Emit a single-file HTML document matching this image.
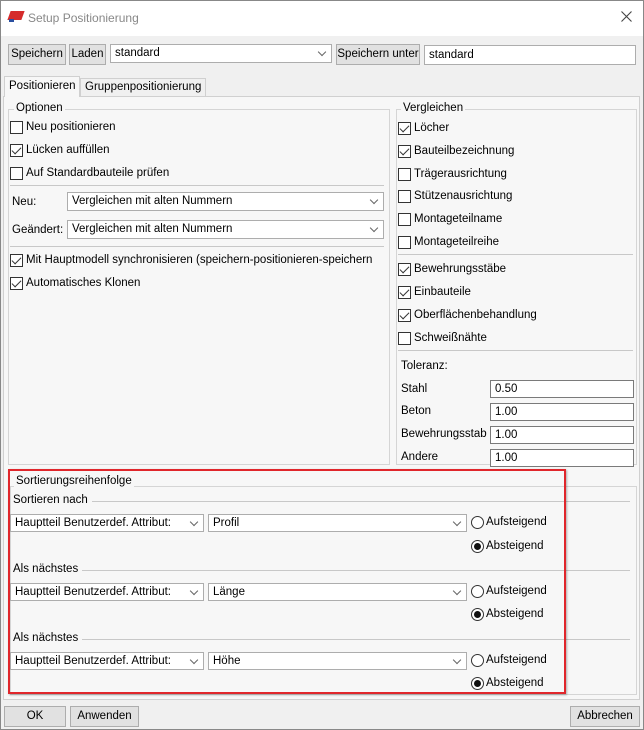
<!DOCTYPE html>
<html><head><meta charset="utf-8"><style>
*{box-sizing:border-box;margin:0;padding:0}
body{width:644px;height:730px;background:#f0f0f0;font-family:"Liberation Sans",sans-serif;font-size:11.5px;color:#000;position:relative;overflow:hidden}
.a{position:absolute;white-space:nowrap}
.win{position:absolute;left:0;top:0;width:644px;height:730px;border:1px solid #888}
.btn{position:absolute;background:#e1e1e1;border:1px solid #adadad;text-align:center;line-height:18px;white-space:nowrap}
.inp{position:absolute;background:#fff;border:1px solid #7a7a7a;padding-left:4px;line-height:16px;white-space:nowrap}
.cmb{position:absolute;background:#fff;border:1px solid #adadad;padding-left:4px;line-height:16px;white-space:nowrap}
.cmb:after{content:"";position:absolute;right:6px;top:4px;width:5px;height:5px;border-right:1px solid #666;border-bottom:1px solid #666;transform:rotate(45deg)}
.cb{position:absolute;width:13px;height:13px;border:1px solid #333;background:#fff}
.cb.k:after{content:"";position:absolute;left:3px;top:0px;width:4px;height:8px;border-right:1px solid #333;border-bottom:1px solid #333;transform:rotate(45deg)}
.hr{position:absolute;height:1px;background:#c8c8c8}
.rd{position:absolute;width:13px;height:13px;border:1px solid #333;border-radius:50%;background:#fff}
.rd.k:after{content:"";position:absolute;left:2px;top:2px;width:7px;height:7px;border-radius:50%;background:#111}
.grp{position:absolute;border:1px solid #d5d5d5}
</style></head><body>
<div class="a" style="left:0;top:0;width:644px;height:36px;background:#fff"></div>
<div class="a" style="left:9px;top:11px;width:14px;height:9px;background:#d52b2b;transform:skewX(-20deg)"></div>
<div class="a" style="left:9px;top:19px;width:5px;height:3px;background:#2a4fa0"></div>
<div class="a" style="left:28px;top:11px;color:#888;font-size:12px">Setup Positionierung</div>
<svg class="a" style="left:621px;top:11px" width="11" height="11"><path d="M0.5 0.5L10.5 10.5M10.5 0.5L0.5 10.5" stroke="#444" stroke-width="1.1"/></svg>

<div class="btn" style="left:8px;top:44px;width:58px;height:21px">Speichern</div>
<div class="btn" style="left:69px;top:44px;width:37px;height:21px">Laden</div>
<div class="cmb" style="left:110px;top:44px;width:222px;height:19px">standard</div>
<div class="btn" style="left:336px;top:44px;width:84px;height:21px">Speichern unter</div>
<div class="inp" style="left:424px;top:45px;width:212px;height:20px;border-color:#adadad;line-height:18px">standard</div>

<div class="a" style="left:3px;top:96px;width:637px;height:604px;border:1px solid #d0d0d0;background:#f7f7f7"></div>
<div class="a" style="left:4px;top:76px;width:76px;height:21px;background:#f7f7f7;border:1px solid #d0d0d0;border-bottom:none;padding:3px 0 0 4px">Positionieren</div>
<div class="a" style="left:80px;top:78px;width:126px;height:18px;background:#f0f0f0;border:1px solid #d0d0d0;border-bottom:none;padding:2px 0 0 4px">Gruppenpositionierung</div>

<div class="grp" style="left:8px;top:109px;width:382px;height:356px"></div>
<div class="a" style="left:14px;top:102px;background:#f7f7f7;padding:0 2px">Optionen</div>
<div class="cb" style="left:10px;top:121px"></div><div class="a" style="left:26px;top:121px">Neu positionieren</div>
<div class="cb k" style="left:10px;top:144px"></div><div class="a" style="left:26px;top:144px">Lücken auffüllen</div>
<div class="cb" style="left:10px;top:167px"></div><div class="a" style="left:26px;top:167px">Auf Standardbauteile prüfen</div>
<div class="hr" style="left:10px;top:185px;width:374px"></div>
<div class="a" style="left:12px;top:196px">Neu:</div>
<div class="cmb" style="left:67px;top:192px;width:317px;height:19px">Vergleichen mit alten Nummern</div>
<div class="a" style="left:12px;top:224px">Geändert:</div>
<div class="cmb" style="left:67px;top:220px;width:317px;height:19px">Vergleichen mit alten Nummern</div>
<div class="hr" style="left:10px;top:246px;width:374px"></div>
<div class="cb k" style="left:10px;top:254px"></div><div class="a" style="left:26px;top:254px;width:360px;overflow:hidden">Mit Hauptmodell synchronisieren (speichern-positionieren-speichern</div>
<div class="cb k" style="left:10px;top:277px"></div><div class="a" style="left:26px;top:277px">Automatisches Klonen</div>

<div class="grp" style="left:396px;top:109px;width:241px;height:356px"></div>
<div class="a" style="left:401px;top:102px;background:#f7f7f7;padding:0 2px">Vergleichen</div>
<div class="cb k" style="left:398px;top:122px"></div><div class="a" style="left:414px;top:122px">Löcher</div>
<div class="cb k" style="left:398px;top:145px"></div><div class="a" style="left:414px;top:145px">Bauteilbezeichnung</div>
<div class="cb" style="left:398px;top:168px"></div><div class="a" style="left:414px;top:168px">Trägerausrichtung</div>
<div class="cb" style="left:398px;top:190px"></div><div class="a" style="left:414px;top:190px">Stützenausrichtung</div>
<div class="cb" style="left:398px;top:213px"></div><div class="a" style="left:414px;top:213px">Montageteilname</div>
<div class="cb" style="left:398px;top:236px"></div><div class="a" style="left:414px;top:236px">Montageteilreihe</div>
<div class="hr" style="left:398px;top:254px;width:235px"></div>
<div class="cb k" style="left:398px;top:263px"></div><div class="a" style="left:414px;top:263px">Bewehrungsstäbe</div>
<div class="cb k" style="left:398px;top:286px"></div><div class="a" style="left:414px;top:286px">Einbauteile</div>
<div class="cb k" style="left:398px;top:309px"></div><div class="a" style="left:414px;top:309px">Oberflächenbehandlung</div>
<div class="cb" style="left:398px;top:332px"></div><div class="a" style="left:414px;top:332px">Schweißnähte</div>
<div class="hr" style="left:398px;top:350px;width:235px"></div>
<div class="a" style="left:401px;top:360px">Toleranz:</div>
<div class="a" style="left:401px;top:383px">Stahl</div><div class="inp" style="left:490px;top:380px;width:144px;height:18px">0.50</div>
<div class="a" style="left:401px;top:405px">Beton</div><div class="inp" style="left:490px;top:403px;width:144px;height:18px">1.00</div>
<div class="a" style="left:401px;top:428px">Bewehrungsstab</div><div class="inp" style="left:490px;top:426px;width:144px;height:18px">1.00</div>
<div class="a" style="left:401px;top:451px">Andere</div><div class="inp" style="left:490px;top:449px;width:144px;height:18px">1.00</div>

<div class="grp" style="left:10px;top:486px;width:627px;height:209px"></div>
<div class="a" style="left:14px;top:475px;background:#f7f7f7;padding:0 2px">Sortierungsreihenfolge</div>
<div class="a" style="left:13px;top:494px">Sortieren nach</div><div class="hr" style="left:92px;top:501px;width:538px"></div>
<div class="cmb" style="left:10px;top:514px;width:194px;height:18px">Hauptteil Benutzerdef. Attribut:</div>
<div class="cmb" style="left:208px;top:514px;width:259px;height:18px">Profil</div>
<div class="rd" style="left:471px;top:516px"></div><div class="a" style="left:486px;top:516px">Aufsteigend</div>
<div class="rd k" style="left:471px;top:540px"></div><div class="a" style="left:486px;top:540px">Absteigend</div>
<div class="a" style="left:13px;top:563px">Als nächstes</div><div class="hr" style="left:82px;top:570px;width:548px"></div>
<div class="cmb" style="left:10px;top:583px;width:194px;height:18px">Hauptteil Benutzerdef. Attribut:</div>
<div class="cmb" style="left:208px;top:583px;width:259px;height:18px">Länge</div>
<div class="rd" style="left:471px;top:585px"></div><div class="a" style="left:486px;top:585px">Aufsteigend</div>
<div class="rd k" style="left:471px;top:608px"></div><div class="a" style="left:486px;top:608px">Absteigend</div>
<div class="a" style="left:13px;top:632px">Als nächstes</div><div class="hr" style="left:82px;top:639px;width:548px"></div>
<div class="cmb" style="left:10px;top:652px;width:194px;height:18px">Hauptteil Benutzerdef. Attribut:</div>
<div class="cmb" style="left:208px;top:652px;width:259px;height:18px">Höhe</div>
<div class="rd" style="left:471px;top:654px"></div><div class="a" style="left:486px;top:654px">Aufsteigend</div>
<div class="rd k" style="left:471px;top:677px"></div><div class="a" style="left:486px;top:677px">Absteigend</div>
<div class="a" style="left:8px;top:469px;width:558px;height:225px;border:2px solid #e0262b;box-shadow:1px 1px 2px rgba(0,0,0,.3)"></div>

<div class="btn" style="left:4px;top:706px;width:62px;height:21px">OK</div>
<div class="btn" style="left:70px;top:706px;width:69px;height:21px">Anwenden</div>
<div class="btn" style="left:570px;top:706px;width:70px;height:21px">Abbrechen</div>
<div class="win"></div>
</body></html>
